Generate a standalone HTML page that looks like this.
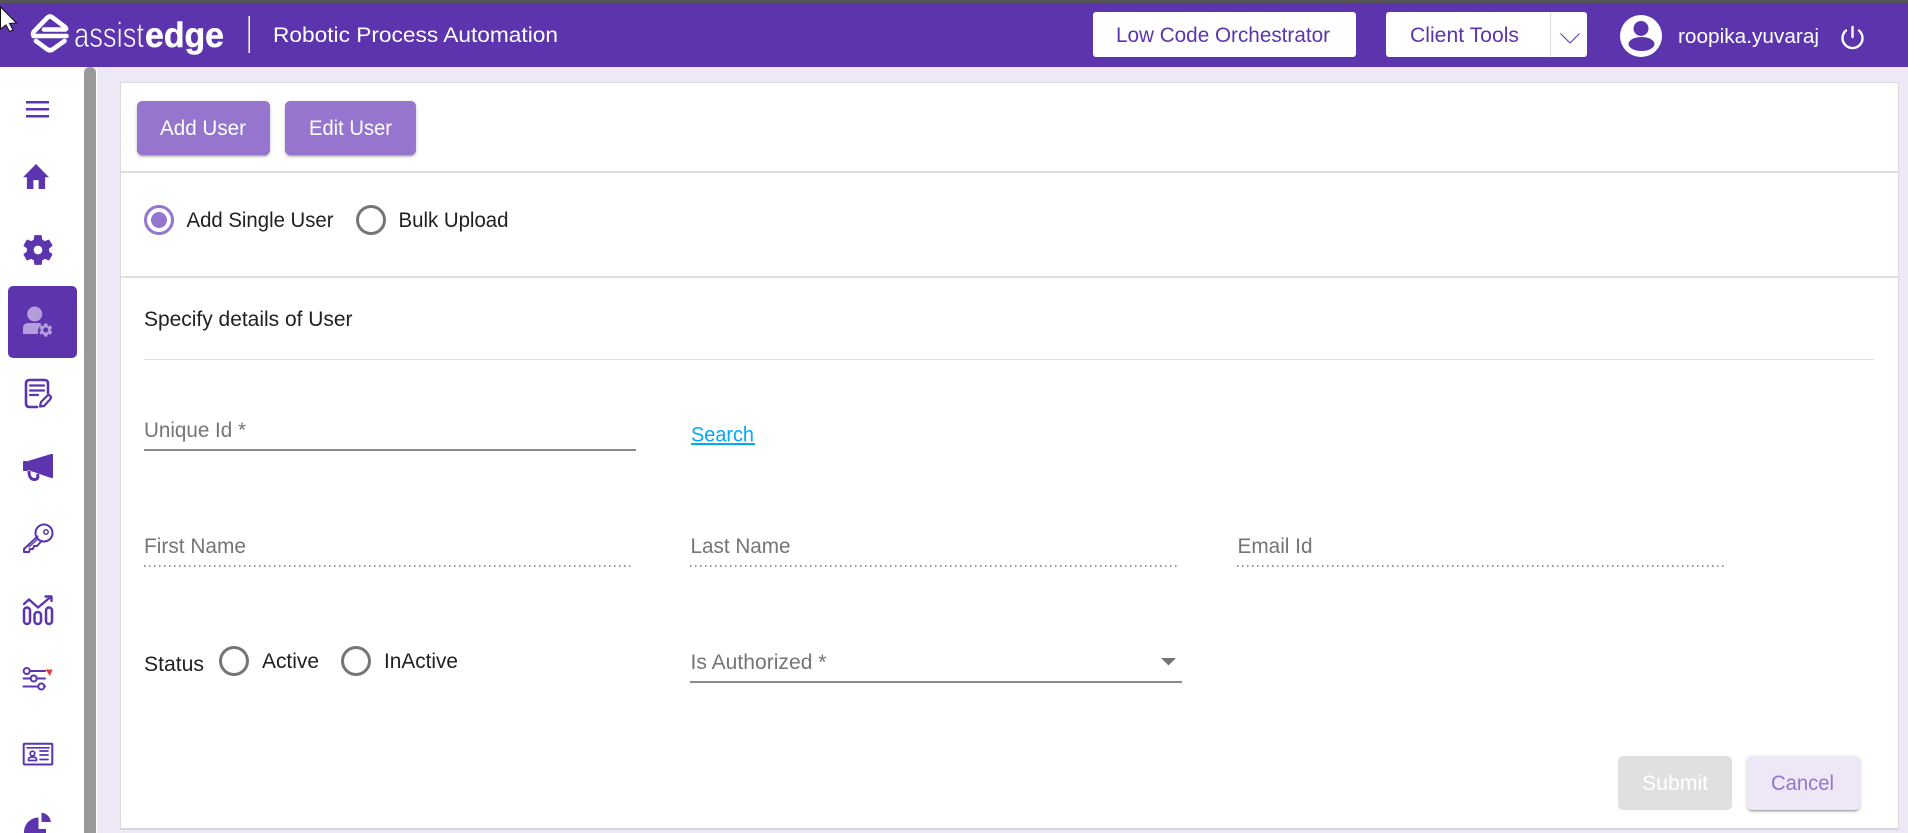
<!DOCTYPE html>
<html><head><meta charset="utf-8"><title>AssistEdge</title>
<style>
html,body{margin:0;padding:0;width:1908px;height:833px;overflow:hidden;background:#ede7f6;font-family:"Liberation Sans",sans-serif}
.a{position:absolute}
.btn{position:absolute;border-radius:5px;box-shadow:0 3px 1px -2px rgba(0,0,0,.2),0 2px 2px rgba(0,0,0,.14),0 1px 5px rgba(0,0,0,.12)}
.dot{position:absolute;height:2px;background-image:linear-gradient(to right,rgba(0,0,0,.42) 0,rgba(0,0,0,.42) 33%,transparent 33%);background-size:5px 2px;background-repeat:repeat-x}
svg{position:absolute;left:0;top:0}
text{font-family:"Liberation Sans",sans-serif;font-size:21px}
</style></head><body>
<div class="a" style="left:0;top:0;width:1908px;height:3px;background:#555"></div>
<div class="a" style="left:0;top:3px;width:1908px;height:64px;background:#5c35ae"></div>
<div class="a" style="left:0;top:67px;width:84px;height:766px;background:#fff"></div>
<div class="a" style="left:84px;top:67px;width:12px;height:766px;background:#999;border-radius:6px 6px 0 0"></div>
<div class="a" style="left:96px;top:67px;width:1px;height:766px;background:#fff"></div>
<div class="a" style="left:120px;top:82px;width:1777px;height:745px;background:#fff;border:1px solid #dcdcdc;border-bottom:2px solid #d8d8d8;box-sizing:content-box"></div>
<div class="a" style="left:121px;top:171px;width:1777px;height:2px;background:#e0e0e0"></div>
<div class="a" style="left:121px;top:276px;width:1777px;height:2px;background:#e0e0e0"></div>
<div class="a" style="left:144px;top:359px;width:1730px;height:1px;background:#e0e0e0"></div>
<div class="a" style="left:1093px;top:12px;width:263px;height:45px;background:#fff;border-radius:3px"></div>
<div class="a" style="left:1386px;top:12px;width:201px;height:45px;background:#fff;border-radius:3px"></div>
<div class="a" style="left:1550px;top:12px;width:1px;height:45px;background:#ddd"></div>
<div class="btn" style="left:137px;top:101px;width:133px;height:54px;background:#9575cd"></div>
<div class="btn" style="left:285px;top:101px;width:131px;height:54px;background:#9575cd"></div>
<div class="a" style="left:1618px;top:756px;width:114px;height:54px;background:#e0e0e0;border-radius:5px"></div>
<div class="btn" style="left:1747px;top:756px;width:113px;height:54px;background:#ede7f6"></div>
<div class="a" style="left:8px;top:286px;width:69px;height:72px;background:#5c35ae;border-radius:5px"></div>
<div class="a" style="left:144px;top:449px;width:492px;height:2px;background:#8a8a8a"></div>
<div class="a" style="left:690px;top:681px;width:492px;height:2px;background:#8a8a8a"></div>
<div class="dot" style="left:144px;top:565px;width:489px"></div>
<div class="dot" style="left:690px;top:565px;width:489px"></div>
<div class="dot" style="left:1237px;top:565px;width:489px"></div>
<div class="a" style="left:691px;top:443px;width:64px;height:2px;background:#03a9f4"></div>

<svg width="1908" height="833" viewBox="0 0 1908 833">
<path d="M0.5 7 L16.5 23 L9.5 23.5 L13 30 L9.5 31.5 L6 25 L0.5 29 Z" fill="#fff" stroke="#111" stroke-width="1"/>
<g fill="none" stroke="#fff" stroke-width="4.6" stroke-linejoin="round" stroke-linecap="round">
<path d="M33.500 35.500 Q32.500 33 34 31.500 L47.500 17.500 Q50 15.500 52.500 17.500 L65 27 Q67.500 29.500 64 29.500 L44 29.500"/>
<path d="M33.500 36 L66.500 36"/>
<path d="M36 41 L47.500 49.500 Q50 51 52.500 49.500 L64.500 41"/>
</g>
<text x="74" y="47" style="font-size:35px" fill="#fff" stroke="#5c35ae" stroke-width=".8" textLength="70" lengthAdjust="spacingAndGlyphs">assist</text>
<text x="145" y="47" style="font-size:35px;font-weight:700" fill="#fff" stroke="#fff" stroke-width=".5" textLength="79" lengthAdjust="spacingAndGlyphs">edge</text>
<rect x="248.500" y="16" width="1.500" height="37" fill="#fff"/>
<text x="273" y="42" fill="#fff" textLength="285" lengthAdjust="spacingAndGlyphs">Robotic Process Automation</text>
<text x="1116" y="42" fill="#5c35ae" textLength="214" lengthAdjust="spacingAndGlyphs">Low Code Orchestrator</text>
<text x="1410" y="42" fill="#5c35ae" textLength="109" lengthAdjust="spacingAndGlyphs">Client Tools</text>
<path d="M1560.500 33.500 L1570 43 L1579.500 33.500" fill="none" stroke="#5c35ae" stroke-width="1"/>
<circle cx="1641" cy="36" r="21" fill="#fff"/>
<circle cx="1641" cy="28.500" r="7.500" fill="#5c35ae"/>
<ellipse cx="1641.500" cy="44" rx="13" ry="7" fill="#5c35ae"/>
<text x="1678" y="43" fill="#fff" style="font-size:20px" textLength="141" lengthAdjust="spacingAndGlyphs">roopika.yuvaraj</text>
<g fill="none" stroke="#fff" stroke-width="2.400" stroke-linecap="round">
<path d="M1846 30.500 A10 10 0 1 0 1859 30.500"/>
<path d="M1852.500 27 L1852.500 37"/>
</g>
<text x="160" y="135" fill="#fff" textLength="86" lengthAdjust="spacingAndGlyphs">Add User</text>
<text x="309" y="135" fill="#fff" textLength="83" lengthAdjust="spacingAndGlyphs">Edit User</text>
<text x="1642" y="790" fill="#fff" textLength="66" lengthAdjust="spacingAndGlyphs">Submit</text>
<text x="1771" y="790" fill="#9575cd" textLength="63" lengthAdjust="spacingAndGlyphs">Cancel</text>
<g fill="none" stroke-width="3">
<circle cx="159" cy="220" r="13.500" stroke="#9575cd"/>
<circle cx="371" cy="220" r="13.500" stroke="#757575"/>
<circle cx="234" cy="661" r="13.500" stroke="#757575"/>
<circle cx="356" cy="661" r="13.500" stroke="#757575"/>
</g>
<circle cx="159" cy="220" r="8" fill="#9575cd"/>
<g fill="#212121">
<text x="186.500" y="227" textLength="147" lengthAdjust="spacingAndGlyphs">Add Single User</text>
<text x="398.500" y="227" textLength="110" lengthAdjust="spacingAndGlyphs">Bulk Upload</text>
<text x="144" y="326" textLength="208.500" lengthAdjust="spacingAndGlyphs">Specify details of User</text>
<text x="144" y="671" textLength="60" lengthAdjust="spacingAndGlyphs">Status</text>
<text x="262" y="668" textLength="57" lengthAdjust="spacingAndGlyphs">Active</text>
<text x="384" y="668" textLength="74" lengthAdjust="spacingAndGlyphs">InActive</text>
</g>
<g fill="#757575">
<text x="144" y="437" textLength="102" lengthAdjust="spacingAndGlyphs">Unique Id *</text>
<text x="144" y="553" textLength="102" lengthAdjust="spacingAndGlyphs">First Name</text>
<text x="690.500" y="553" textLength="100" lengthAdjust="spacingAndGlyphs">Last Name</text>
<text x="1237.500" y="553" textLength="75" lengthAdjust="spacingAndGlyphs">Email Id</text>
<text x="690.500" y="669" textLength="136" lengthAdjust="spacingAndGlyphs">Is Authorized *</text>
</g>
<text x="691" y="441.500" fill="#03a9f4" textLength="63" lengthAdjust="spacingAndGlyphs">Search</text>
<path d="M1161 658 H1176 L1168.500 665.500 Z" fill="#757575"/>
<g fill="#5c35ae">
<rect x="26" y="101" width="23" height="2.500"/><rect x="26" y="108" width="23" height="2.500"/><rect x="26" y="115" width="23" height="2.500"/>
<path transform="translate(20.400 159.600) scale(1.300 1.470)" d="M10 20v-6h4v6h5v-8h3L12 3 2 12h3v8z"/>
<path transform="translate(19.400 231.400) scale(1.550)" d="M19.14 12.94c.04-.3.06-.61.06-.94 0-.32-.02-.64-.07-.94l2.03-1.58c.18-.14.23-.41.12-.61l-1.92-3.32c-.12-.22-.37-.29-.59-.22l-2.39.96c-.5-.38-1.03-.7-1.62-.94l-.36-2.54c-.04-.24-.24-.41-.48-.41h-3.84c-.24 0-.43.17-.47.41l-.36 2.54c-.59.24-1.13.57-1.62.94l-2.39-.96c-.22-.08-.47 0-.59.22L2.74 8.87c-.12.21-.08.47.12.61l2.03 1.58c-.05.3-.09.63-.09.94s.02.64.07.94l-2.03 1.58c-.18.14-.23.41-.12.61l1.92 3.32c.12.22.37.29.59.22l2.39-.96c.5.38 1.03.7 1.62.94l.36 2.54c.05.24.24.41.48.41h3.84c.24 0 .44-.17.47-.41l.36-2.54c.59-.24 1.13-.56 1.62-.94l2.39.96c.22.08.47 0 .59-.22l1.92-3.32c.12-.22.07-.47-.12-.61l-2.01-1.58zM12 14.800c-1.54 0-2.800-1.26-2.800-2.800s1.26-2.800 2.800-2.800 2.800 1.26 2.800 2.800-1.26 2.800-2.800 2.800z"/>
<rect x="23" y="461" width="5" height="10" rx="1"/>
<path d="M28 461 L51 454 Q53 453.500 53 455 L53 477 Q53 478.500 51 478 L28 470 Z"/>
<path d="M29 471 Q29 480 35 479.500 Q39 479 37.500 474" fill="none" stroke="#5c35ae" stroke-width="3"/>
<path d="M41.500 812.800 A10 10 0 0 1 50.800 822 L41.500 822 Z"/>
<path d="M38.500 817.500 L38.500 829 L46 829 L46 833 L24 833 A14.500 14.500 0 0 1 38.500 817.500 Z"/>
</g>
<g fill="#b39ddb">
<circle cx="34.700" cy="314" r="7.500"/>
<path d="M23 334 V328 Q23 323 29 323 H38 Q41 323 41.500 324.500 Q37 328 38 334 Z"/>
<path transform="translate(37.500 321.800) scale(.685)" d="M19.14 12.94c.04-.3.06-.61.06-.94 0-.32-.02-.64-.07-.94l2.03-1.58c.18-.14.23-.41.12-.61l-1.92-3.32c-.12-.22-.37-.29-.59-.22l-2.39.96c-.5-.38-1.03-.7-1.62-.94l-.36-2.54c-.04-.24-.24-.41-.48-.41h-3.84c-.24 0-.43.17-.47.41l-.36 2.54c-.59.24-1.13.57-1.62.94l-2.39-.96c-.22-.08-.47 0-.59.22L2.74 8.87c-.12.21-.08.47.12.61l2.03 1.58c-.05.3-.09.63-.09.94s.02.64.07.94l-2.03 1.58c-.18.14-.23.41-.12.61l1.92 3.32c.12.22.37.29.59.22l2.39-.96c.5.38 1.03.7 1.62.94l.36 2.54c.05.24.24.41.48.41h3.84c.24 0 .44-.17.47-.41l.36-2.54c.59-.24 1.13-.56 1.62-.94l2.39.96c.22.08.47 0 .59-.22l1.92-3.32c.12-.22.07-.47-.12-.61l-2.01-1.58zM12 15.600c-1.98 0-3.600-1.62-3.600-3.600s1.620-3.600 3.600-3.600 3.600 1.620 3.600 3.600-1.620 3.600-3.600 3.600z"/>
</g>
<g fill="none" stroke="#5c35ae" stroke-linecap="round" stroke-linejoin="round">
<path stroke-width="2.600" d="M48 393 V383.500 Q48 380 44.500 380 H29.500 Q26 380 26 383.500 V403.500 Q26 407 29.500 407 H37"/>
<path stroke-width="2.200" d="M30 385.500 H44 M30 390.500 H44 M30 395 H38"/>
<path stroke-width="2.200" d="M40 406.500 L41 402 L47.500 395.500 Q49 394.500 50.500 396 Q51.500 398 50 399.500 L44 406 Z"/>
<circle cx="44" cy="533" r="8.500" stroke-width="2"/>
<circle cx="46" cy="532" r="2.200" stroke-width="1.500"/>
<path stroke-width="2" d="M37.500 536.500 L24 549 L24 552 L29 552 L30 549 L33 549 L34 546 L37 546 L41 541.500"/>
<path stroke-width="1.200" d="M29 547 L38 539"/>
<rect x="24" y="607.500" width="6" height="16.500" rx="3" stroke-width="2.500"/>
<rect x="34.500" y="612" width="6.500" height="12" rx="3.200" stroke-width="2.500"/>
<rect x="46" y="607.500" width="6" height="16.500" rx="3" stroke-width="2.500"/>
<path stroke-width="2.400" d="M24 604 L29 599.500 L38 607.500 L50 597.500 M45.500 596.500 H51.500 V601"/>
<path stroke-width="2" d="M30 671 H45 M23.500 678.500 H30.500 M37 678.500 H45 M23.500 686.500 H38 M44.500 686.500 H45"/>
<circle cx="26.700" cy="671" r="3" stroke-width="2"/>
<circle cx="33.700" cy="678.500" r="3" stroke-width="2"/>
<circle cx="41.300" cy="686.500" r="3" stroke-width="2"/>
<rect x="23.700" y="743.700" width="28.600" height="20.800" rx="1" stroke-width="2"/>
<path stroke-width="1.700" d="M27 747.800 H49 M40 751 H48 M40 755 H48 M40 759.500 H48 M28.500 760.500 H36.500 V759 Q36 757 32.500 757 Q29 757 28.500 759 Z"/>
<circle cx="32.500" cy="753.500" r="2.300" stroke-width="1.700"/>
</g>
<path d="M45.500 669.500 H52.500 L50 676 Z" fill="#e53935"/>
</svg>
</body></html>
